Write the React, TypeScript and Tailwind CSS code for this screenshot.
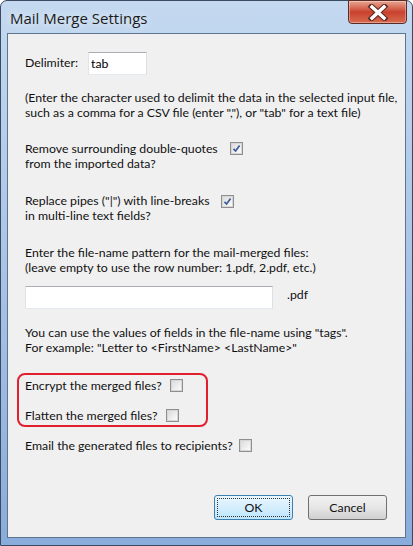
import React from "react";

function Check({ checked }: { checked?: boolean }) {
  return (
    <div className="w-[13px] h-[13px] border border-[#8f8f8f] bg-[#f4f4f4] flex items-center justify-center shrink-0">
      <div className="w-[11px] h-[11px] border border-[#d6d6d6] bg-gradient-to-br from-[#dcdcdc] to-[#fbfbfb] flex items-center justify-center">
        {checked && (
          <svg width="9" height="9" viewBox="0 0 9 9">
            <path d="M1.5 4.8 L3.6 7 L7.6 1.6" fill="none" stroke="#3d5a99" strokeWidth="1.7" />
          </svg>
        )}
      </div>
    </div>
  );
}

function TextBox({ w, value }: { w: string; value?: string }) {
  return (
    <div
      className={`${w} h-[23px] bg-white border border-t-[#abadb3] border-l-[#e2e3ea] border-r-[#dbdfe6] border-b-[#e3e9ef] flex items-center pl-[2px] text-black`}
    >
      {value}
    </div>
  );
}

export default function App() {
  return (
    <div className="w-[413px] h-[546px] bg-white overflow-hidden" style={{ fontFamily: '"Lato", "Open Sans", sans-serif' }}>
      <div className="w-[413px] h-[546px] rounded-t-[7px] border border-[#3a4b60] bg-gradient-to-b from-[#c4d9f0] via-[#a8c3e6] to-[#8aacdb] flex flex-col px-[6px] pb-[7px]">
        <div className="h-[32px] shrink-0 flex items-start justify-between">
          <div
            className="pl-[3px] pt-[7px] text-[15px] leading-[20px] text-[#1b1b1b] [text-shadow:0_0_8px_rgba(255,255,255,0.9)]"
            style={{ fontFamily: '"Open Sans", sans-serif' }}
          >
            Mail Merge Settings
          </div>
          <div className="w-[59px] h-[24px] mt-[-1px] mr-[-1px] rounded-b-[4px] border border-[#5a2a25] bg-gradient-to-b from-[#e6a592] via-[#c9412e] to-[#d96a4f] flex items-center justify-center shadow-[inset_0_0_0_1px_rgba(255,255,255,0.35)]">
            <svg width="22" height="17" viewBox="0 0 22 17">
              <path d="M4.5 2.5 L17.5 14.5 M17.5 2.5 L4.5 14.5" stroke="#5c2a22" strokeWidth="5.5" strokeLinecap="square" />
              <path d="M5 3 L17 14 M17 3 L5 14" stroke="#ffffff" strokeWidth="3.4" strokeLinecap="square" />
            </svg>
          </div>
        </div>
        <div className="flex-1 min-h-0 border border-[#5e7591] bg-[#f0f0f0] flex flex-col text-[12.3px] leading-[15px] text-[#111] pl-[17px] whitespace-nowrap">
          <div className="flex items-start mt-[18px]">
            <div className="w-[63px] pt-[3px]">Delimiter:</div>
            <TextBox w="w-[59px]" value="tab" />
          </div>
          <div className="mt-[15px]">
            (Enter the character used to delimit the data in the selected input file,
            <br />
            such as a comma for a CSV file (enter ","), or "tab" for a text file)
          </div>
          <div className="flex items-start mt-[21px]">
            <div className="w-[205px]">
              Remove surrounding double-quotes
              <br />
              from the imported data?
            </div>
            <div className="mt-[1px]">
              <Check checked />
            </div>
          </div>
          <div className="flex items-start mt-[22px]">
            <div className="w-[196px]">
              Replace pipes ("|") with line-breaks
              <br />
              in multi-line text fields?
            </div>
            <div className="mt-[2px]">
              <Check checked />
            </div>
          </div>
          <div className="mt-[22px]">
            Enter the file-name pattern for the mail-merged files:
            <br />
            (leave empty to use the row number: 1.pdf, 2.pdf, etc.)
          </div>
          <div className="flex items-start mt-[11px]">
            <TextBox w="w-[248px]" />
            <div className="ml-[14px] pt-[1px]">.pdf</div>
          </div>
          <div className="mt-[16px]">
            You can use the values of fields in the file-name using "tags".
            <br />
            For example: "Letter to &lt;FirstName&gt; &lt;LastName&gt;"
          </div>
          <div className="ml-[-8px] mt-[18px] w-[191px] h-[54px] border-2 border-[#e0202c] rounded-[8px] pl-[6px] flex flex-col">
            <div className="flex items-center mt-[3px]">
              <div className="w-[145px]">Encrypt the merged files?</div>
              <Check />
            </div>
            <div className="flex items-center mt-[15px]">
              <div className="w-[141px]">Flatten the merged files?</div>
              <Check />
            </div>
          </div>
          <div className="flex items-center mt-[11px]">
            <div className="w-[214px]">Email the generated files to recipients?</div>
            <Check />
          </div>
          <div className="flex justify-end gap-[15px] mt-[42px] pr-[18px]">
            <div className="w-[79px] h-[25px] rounded-[3px] border border-[#3c7fb1] bg-gradient-to-b from-[#eaf6fd] to-[#bee6fd] p-[2px]">
              <div className="w-full h-full border border-dotted border-[#333] flex items-center justify-center">OK</div>
            </div>
            <div className="w-[79px] h-[25px] rounded-[3px] border border-[#707070] bg-gradient-to-b from-[#f2f2f2] via-[#e6e6e6] to-[#d0d0d0] flex items-center justify-center">
              Cancel
            </div>
          </div>
        </div>
      </div>
    </div>
  );
}
